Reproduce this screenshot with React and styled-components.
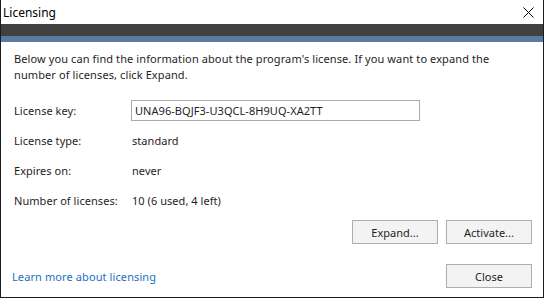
import React from "react";
import styled, { createGlobalStyle } from "styled-components";

const GlobalStyle = createGlobalStyle`
    html, body {
        margin: 0;
        padding: 0;
        background: #ffffff;
    }
    body {
        font-family: "Noto Sans", "Open Sans", sans-serif;
        font-size: 11px;
        color: #1e1e1e;
    }
`;

const Window = styled.div`
    width: 544px;
    height: 298px;
    box-sizing: border-box;
    border: 1px solid #1c1c1c;
    border-top: none;
    display: flex;
    flex-direction: column;
    background: #ffffff;
`;

const TitleBar = styled.div`
    height: 24px;
    display: flex;
    align-items: center;
    justify-content: space-between;
    padding: 0 9px 0 2px;
    font-size: 12px;
    color: #000000;
`;

const CloseX = styled.button`
    width: 12px;
    height: 12px;
    padding: 0;
    border: none;
    background: none;
    display: flex;
    align-items: center;
    justify-content: center;
`;

const Banner = styled.div`
    height: 12px;
    background: #404040;
    border-bottom: 6px solid #5b7aa1;
`;

const Body = styled.div`
    flex: 1;
    display: flex;
    flex-direction: column;
    padding: 9px 11px 9px 13px;
`;

const Intro = styled.p`
    margin: 0;
    line-height: 16px;
    letter-spacing: 0.1px;
`;

const Fields = styled.div`
    display: grid;
    grid-template-columns: 117px 289px;
    grid-auto-rows: 30px;
    align-items: center;
    margin-top: 12px;
    letter-spacing: 0.05px;
`;

const Label = styled.div`
    color: #1e1e1e;
`;

const Value = styled.div`
    padding-left: 1px;
`;

const KeyBox = styled.div`
    height: 21px;
    box-sizing: border-box;
    border: 1px solid #a9a9a9;
    padding: 0 3px;
    display: flex;
    align-items: center;
`;

const Actions = styled.div`
    display: flex;
    justify-content: flex-end;
    gap: 8px;
    margin-top: 5px;
`;

const Footer = styled.div`
    margin-top: auto;
    display: flex;
    align-items: center;
    justify-content: space-between;
`;

const Link = styled.a`
    color: #1a6fc3;
    text-decoration: none;
    margin-left: -2px;
    letter-spacing: 0.1px;
`;

const Button = styled.button`
    width: 86px;
    height: 24px;
    box-sizing: border-box;
    border: 1px solid #adadad;
    background: #f3f3f3;
    font-family: inherit;
    font-size: 11px;
    color: #1e1e1e;
    padding: 0;
`;

const fields = [
    { label: "License type:", value: "standard" },
    { label: "Expires on:", value: "never" },
    { label: "Number of licenses:", value: "10 (6 used, 4 left)" },
];

export default function App() {
    return (
        <>
            <GlobalStyle />
            <Window>
                <TitleBar>
                    <span>Licensing</span>
                    <CloseX aria-label="Close">
                        <svg width="11" height="11" viewBox="0 0 11 11">
                            <path d="M0.5 0.5 L10.5 10.5 M10.5 0.5 L0.5 10.5" stroke="#000" strokeWidth="1" />
                        </svg>
                    </CloseX>
                </TitleBar>
                <Banner />
                <Body>
                    <Intro>
                        Below you can find the information about the program's license. If you want to expand the
                        number of licenses, click Expand.
                    </Intro>
                    <Fields>
                        <Label>License key:</Label>
                        <KeyBox>UNA96-BQJF3-U3QCL-8H9UQ-XA2TT</KeyBox>
                        {fields.map(f => (
                            <React.Fragment key={f.label}>
                                <Label>{f.label}</Label>
                                <Value>{f.value}</Value>
                            </React.Fragment>
                        ))}
                    </Fields>
                    <Actions>
                        <Button>Expand...</Button>
                        <Button>Activate...</Button>
                    </Actions>
                    <Footer>
                        <Link href="#">Learn more about licensing</Link>
                        <Button>Close</Button>
                    </Footer>
                </Body>
            </Window>
        </>
    );
}
